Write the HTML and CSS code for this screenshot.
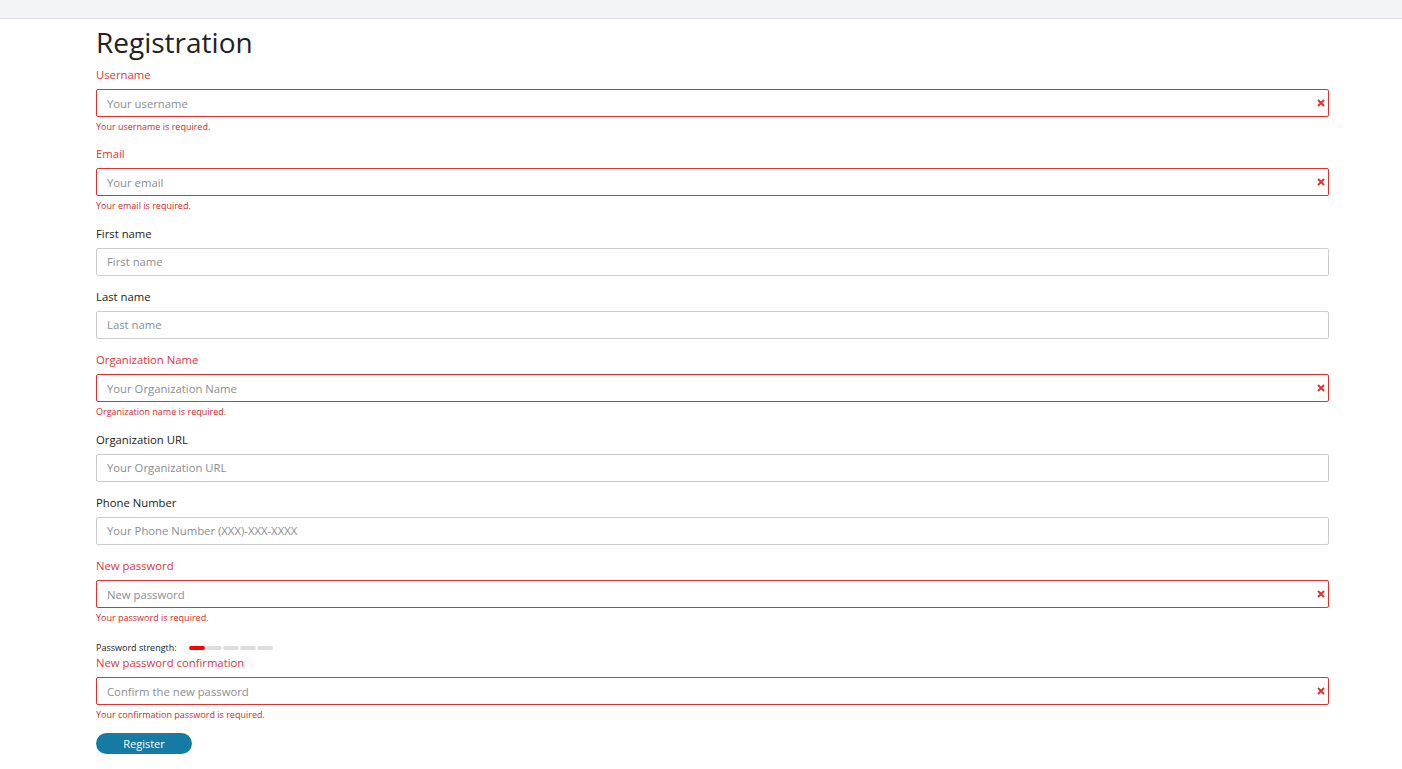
FILE: index.html
```html
<!DOCTYPE html>
<html lang="en">
<head>
<meta charset="utf-8">
<title>Registration</title>
<link rel="stylesheet" href="styles.css">
</head>
<body>
<div class="topbar"></div>
<main class="page">
  <h1 class="title">Registration</h1>
  <form class="form">
    <div class="group invalid">
      <label class="label">Username</label>
      <div class="field"><input class="input" placeholder="Your username"><svg class="x" viewBox="0 0 8 8"><path d="M1 1L7 7M7 1L1 7"/></svg></div>
      <div class="error">Your username is required.</div>
    </div>
    <div class="group invalid">
      <label class="label">Email</label>
      <div class="field"><input class="input" placeholder="Your email"><svg class="x" viewBox="0 0 8 8"><path d="M1 1L7 7M7 1L1 7"/></svg></div>
      <div class="error">Your email is required.</div>
    </div>
    <div class="group">
      <label class="label">First name</label>
      <div class="field"><input class="input" placeholder="First name"></div>
    </div>
    <div class="group">
      <label class="label">Last name</label>
      <div class="field"><input class="input" placeholder="Last name"></div>
    </div>
    <div class="group invalid">
      <label class="label">Organization Name</label>
      <div class="field"><input class="input" placeholder="Your Organization Name"><svg class="x" viewBox="0 0 8 8"><path d="M1 1L7 7M7 1L1 7"/></svg></div>
      <div class="error">Organization name is required.</div>
    </div>
    <div class="group">
      <label class="label">Organization URL</label>
      <div class="field"><input class="input" placeholder="Your Organization URL"></div>
    </div>
    <div class="group">
      <label class="label">Phone Number</label>
      <div class="field"><input class="input" placeholder="Your Phone Number (XXX)-XXX-XXXX"></div>
    </div>
    <div class="group invalid">
      <label class="label">New password</label>
      <div class="field"><input class="input" type="password" placeholder="New password"><svg class="x" viewBox="0 0 8 8"><path d="M1 1L7 7M7 1L1 7"/></svg></div>
      <div class="error">Your password is required.</div>
    </div>
    <div class="strength">
      <span class="strength-label">Password strength:</span>
      <ul class="bars">
        <li class="bar on"></li><li class="bar"></li><li class="bar"></li><li class="bar"></li><li class="bar"></li>
      </ul>
    </div>
    <div class="group invalid last">
      <label class="label">New password confirmation</label>
      <div class="field"><input class="input" type="password" placeholder="Confirm the new password"><svg class="x" viewBox="0 0 8 8"><path d="M1 1L7 7M7 1L1 7"/></svg></div>
      <div class="error">Your confirmation password is required.</div>
    </div>
    <button type="button" class="btn">Register</button>
  </form>
</main>
</body>
</html>
```
FILE: styles.css
```css
* { box-sizing: border-box; }
html, body { margin: 0; padding: 0; background: #fff; }
body {
  font-family: "Open Sans", "Liberation Sans", sans-serif;
  color: #222;
}
.topbar {
  height: 19px;
  background: #f3f4f6;
  border-bottom: 1px solid #dcdde0;
}
.page {
  width: 1233px;
  margin-left: 96px;
}
.title {
  margin: 7px 0 7px;
  font-size: 28px;
  font-weight: 400;
  line-height: 33px;
  color: #222;
}
.form { display: flex; flex-direction: column; }
.group { display: flex; flex-direction: column; margin-bottom: 12.25px; }
.group.last { margin-bottom: 11.5px; }
.label {
  font-size: 11.3px;
  line-height: 17px;
  color: #222;
  margin-bottom: 6px;
}
.invalid .label { color: #d9363e; }
.field { position: relative; }
.input {
  display: block;
  width: 100%;
  height: 28px;
  border: 1px solid #ccc;
  border-radius: 2px;
  padding: 0 10px;
  font-family: inherit;
  font-size: 11.3px;
  color: #333;
  background: #fff;
  outline: none;
}
.input::placeholder { color: #8a8d91; }
.invalid .input { border-color: #dd3333; }
.x {
  position: absolute;
  right: 4px;
  top: 10px;
  width: 8px;
  height: 8px;
  fill: none;
  stroke: #dd3333;
  stroke-width: 2;
}
.error {
  font-size: 9px;
  line-height: 13px;
  padding-top: 3.1px;
  color: #cc2b2b;
}
.strength {
  display: flex;
  align-items: center;
  height: 13px;
  margin-top: 5px;
  margin-bottom: 0;
}
.strength-label {
  font-size: 9px;
  line-height: 13px;
  color: #222;
  width: 93px;
}
.bars {
  display: flex;
  gap: 1px;
  margin: 0;
  padding: 0;
  list-style: none;
}
.bar {
  width: 16px;
  height: 4px;
  border-radius: 2px;
  background: #dddddd;
}
.bar.on { background: #ff0000; }
.btn {
  align-self: flex-start;
  width: 96px;
  height: 21px;
  border: 0;
  border-radius: 11px;
  background: #167ba3;
  color: #fff;
  font-family: inherit;
  font-size: 11px;
  padding: 0;
  line-height: 21px;
  cursor: pointer;
}
```
